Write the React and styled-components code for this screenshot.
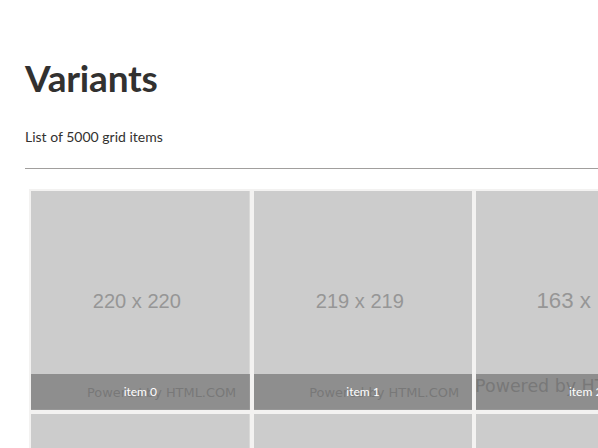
import styled, { createGlobalStyle } from "styled-components";

const GlobalStyle = createGlobalStyle`
  html, body {
    margin: 0;
    padding: 0;
    background: #ffffff;
    overflow: hidden;
  }
  body {
    font-family: Lato, "Open Sans", sans-serif;
    color: #323130;
  }
`;

const TILE = 668 / 3;

// placeholder image sizes, like the ones the list loads
const items = [
  { size: 220, dx: -3.5, fs: 20.2 },
  { size: 219, dx: -3.5, fs: 20.1 },
  { size: 163, dx: 0, fs: 16.6 },
  { size: 180, dx: 0, fs: 17.6 },
  { size: 205, dx: 0, fs: 19.3 },
  { size: 171, dx: 0, fs: 17 },
];

const Placeholder = ({ size, dx, fs }) => (
  <svg
    width="100%"
    height="100%"
    viewBox={`0 0 ${size} ${size}`}
    preserveAspectRatio="xMidYMid slice"
  >
    <rect width={size} height={size} fill="#cccccc" />
    <text
      x={size / 2 + dx}
      y={size / 2 + fs * 0.36}
      textAnchor="middle"
      fontFamily="'Liberation Sans', Arial, sans-serif"
      fontSize={fs}
      fill="#969696"
    >
      {size} x {size}
    </text>
    <text
      x={size - 13.5}
      y={size - 13}
      textAnchor="end"
      fontFamily="'DejaVu Sans', sans-serif"
      fontSize="13"
      fill="#acacac"
    >
      Powered by HTML.COM
    </text>
  </svg>
);

const App = () => {
  return (
    <Page>
      <GlobalStyle />
      <Title>Variants</Title>
      <Subtitle>List of 5000 grid items</Subtitle>
      <Separator />
      <Grid>
        {items.map((item, i) => (
          <Tile key={i}>
            <Padder>
              <Placeholder {...item} />
              <Label>item {i}</Label>
            </Padder>
          </Tile>
        ))}
      </Grid>
    </Page>
  );
};

const Page = styled.div`
  padding-left: 25px;
  height: 448px;
  overflow: hidden;
`;

const Title = styled.h1`
  margin: 52px 0 0;
  font-size: 37px;
  line-height: 52px;
  font-weight: 700;
  color: #323130;
  letter-spacing: -0.2px;
`;

const Subtitle = styled.p`
  margin: 23px 0 0;
  font-size: 14px;
  line-height: 20px;
  color: #323130;
`;

const Separator = styled.div`
  margin-top: 21px;
  height: 1px;
  background: #a19f9d;
`;

const Grid = styled.div`
  margin: 20px 0 0 4px;
  width: 668px;
  display: grid;
  grid-template-columns: repeat(3, ${TILE}px);
  grid-auto-rows: ${TILE}px;
`;

const Tile = styled.div`
  background: #f3f2f1;
  padding: 2px;
  box-sizing: border-box;
  text-align: center;
`;

const Padder = styled.div`
  position: relative;
  width: 100%;
  height: 100%;
  overflow: hidden;
  svg {
    display: block;
  }
`;

const Label = styled.div`
  position: absolute;
  left: 0;
  bottom: 0;
  width: 100%;
  box-sizing: border-box;
  padding: 10px;
  background: rgba(0, 0, 0, 0.3);
  color: #ffffff;
  font-size: 12px;
  line-height: 16px;
`;

export default App;
